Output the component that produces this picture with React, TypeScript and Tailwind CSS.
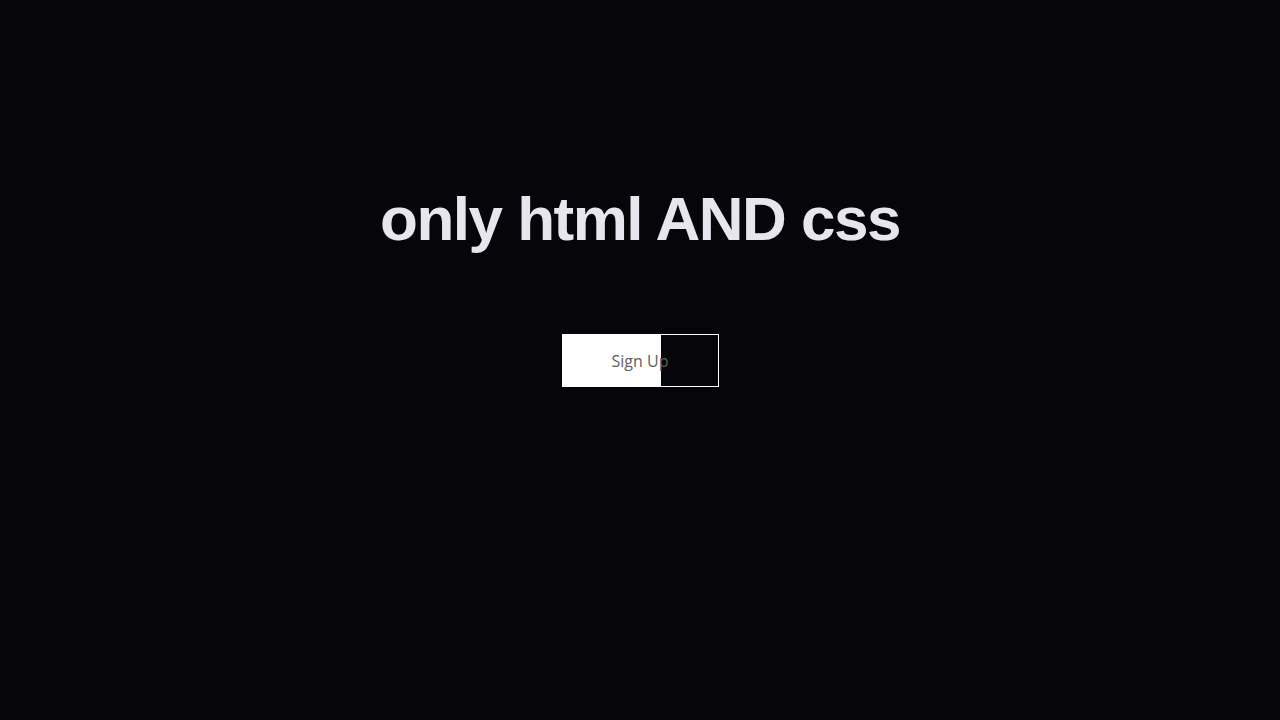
export default function App() {
  return (
    <main className="flex h-[720px] w-full flex-col items-center bg-[#06060a]">
      <h1 className="mt-[179px] text-[62px] font-bold leading-[80px] tracking-[-1.5px] text-[#e6e6ee] [font-family:'Liberation_Sans',Arial,sans-serif]">
        only html AND css
      </h1>
      <button className="relative mt-[75px] h-[53px] w-[157px] border border-white bg-[#06060a]">
        <span className="absolute inset-y-0 left-0 w-[98px] bg-white" />
        <span className="relative text-[16px] text-[#606060] [font-family:'Open_Sans',sans-serif]">Sign Up</span>
      </button>
    </main>
  )
}
